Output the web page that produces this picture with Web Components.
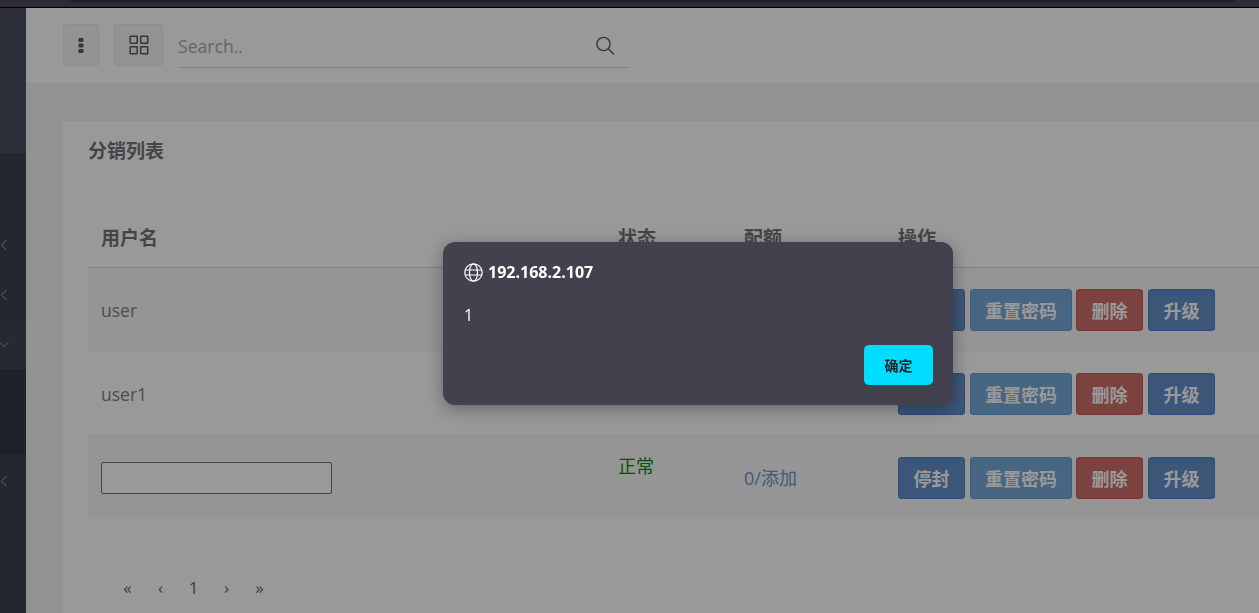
<!DOCTYPE html>
<html lang="zh">
<head>
<meta charset="utf-8">
<title>分销列表</title>
<style>
  html, body { margin: 0; height: 100%; overflow: hidden; background: #f4f4f5; }
  body { font-family: "Open Sans", "Noto Sans CJK SC", sans-serif; color: #7a7a80; }
</style>
</head>
<body>
<app-shell>
  <side-bar slot="side"></side-bar>
  <top-bar slot="top"></top-bar>
  <list-card title="分销列表">
    <user-row name="user"></user-row>
    <user-row name="user1" even></user-row>
    <user-row editing></user-row>
  </list-card>
</app-shell>
<alert-dialog host-name="192.168.2.107" message="1" confirm="确定"></alert-dialog>

<script>
// Outer frame: thin window strip, sidebar on the left, page on the right
class AppShell extends HTMLElement {
  constructor() {
    super();
    this.attachShadow({ mode: 'open' });
    this.shadowRoot.innerHTML = `
      <style>
        :host { display: flex; flex-direction: column; height: 613px; overflow: hidden; }
        .strip { flex: 0 0 7px; background: #4b4856; border-bottom: 1px solid #000; }
        .strip div { height: 2px; margin: 0 24px 0 70px; background: #393742; border-radius: 0 0 3px 3px; }
        .body { flex: 1; display: flex; min-height: 0; }
        .page { flex: 1; min-width: 0; display: flex; flex-direction: column; }
        .content { flex: 1; padding: 37px 0 0 37px; min-height: 0; }
      </style>
      <div class="strip"><div></div></div>
      <div class="body">
        <slot name="side"></slot>
        <div class="page">
          <slot name="top"></slot>
          <div class="content"><slot></slot></div>
        </div>
      </div>
    `;
  }
}

class SideBar extends HTMLElement {
  constructor() {
    super();
    this.attachShadow({ mode: 'open' });
    const left = '<svg width="8" height="12" viewBox="0 0 8 12"><path d="M6.5 1 1.5 6l5 5" fill="none" stroke="#7f828d" stroke-width="1.2"/></svg>';
    const down = '<svg width="10" height="8" viewBox="0 0 10 8"><path d="M0 1.5 4 5.5 8.5 1.5" fill="none" stroke="#7f828d" stroke-width="1.2"/></svg>';
    this.shadowRoot.innerHTML = `
      <style>
        :host { display: flex; flex-direction: column; flex: 0 0 26px; background: #3b414e; overflow: hidden; }
        .brand { height: 145px; background: #4c5162; }
        .item { height: 50px; display: flex; align-items: center; }
        .first { margin-top: 67px; }
        .open { height: 49px; background: #3f4553; }
        .sub { height: 86px; background: #343843; }
        .last { margin-top: 1px; }
      </style>
      <div class="brand"></div>
      <div class="item first">${left}</div>
      <div class="item">${left}</div>
      <div class="item open">${down}</div>
      <div class="sub"></div>
      <div class="item last">${left}</div>
    `;
  }
}

class TopBar extends HTMLElement {
  constructor() {
    super();
    this.attachShadow({ mode: 'open' });
    this.shadowRoot.innerHTML = `
      <style>
        :host { display: flex; align-items: flex-start; gap: 15px; padding: 16px 0 0 37px; box-sizing: border-box; height: 76px; background: #fff; border-bottom: 1px solid #f0f0f0; }
        button { height: 42px; padding: 0; box-sizing: border-box; background: #f5f5f5; border: 1px solid #ececec; border-radius: 3px; display: flex; align-items: center; justify-content: center; }
        .more { width: 36px; }
        .grid { width: 49px; }
        .search { width: 450px; height: 44px; box-sizing: border-box; display: flex; align-items: center; border-bottom: 1px solid #d8d8d8; padding-right: 13px; }
        .search span { flex: 1; font-size: 17.6px; color: #aaa; }
      </style>
      <button class="more" aria-label="more">
        <svg width="6" height="15" viewBox="0 0 6 15" fill="#5a5a60"><rect x=".5" width="5" height="4" rx=".9"/><rect x=".5" y="5.5" width="5" height="4" rx=".9"/><rect x=".5" y="11" width="5" height="4" rx=".9"/></svg>
      </button>
      <button class="grid" aria-label="grid">
        <svg width="20" height="20" viewBox="0 0 20 20" fill="none" stroke="#5a5a60" stroke-width="1.5"><rect x="1.2" y="1.2" width="7" height="7" rx=".5"/><rect x="11.7" y="1.2" width="7" height="7" rx=".5"/><rect x="1.2" y="11.7" width="7" height="7" rx=".5"/><rect x="11.7" y="11.7" width="7" height="7" rx=".5"/></svg>
      </button>
      <div class="search">
        <span>Search..</span>
        <svg width="20" height="20" viewBox="0 0 20 20" fill="none" stroke="#5a5a60" stroke-width="1.4"><circle cx="8.5" cy="8" r="6.6"/><path d="m13.3 12.8 5.7 5.7"/></svg>
      </div>
    `;
  }
}

class ListCard extends HTMLElement {
  constructor() {
    super();
    this.attachShadow({ mode: 'open' });
    this.shadowRoot.innerHTML = `
      <style>
        :host { display: block; background: #fff; padding: 0 0 0 25px; height: 520px; }
        h2 { margin: 0; padding-top: 17px; height: 70px; font-size: 19px; line-height: 26px; font-weight: 700; color: #747478; box-sizing: content-box; }
        .head { display: grid; grid-template-columns: 517px 126px 154px 1fr; height: 60px; box-sizing: border-box; padding: 8px 0 0 13px; font-size: 19px; line-height: 44px; font-weight: 700; color: #747478; border-bottom: 1px solid #d6d6d8; }
        table-pager { margin-top: 59px; }
      </style>
      <h2>${this.getAttribute('title')}</h2>
      <div class="head"><span>用户名</span><span>状态</span><span>配额</span><span>操作</span></div>
      <slot></slot>
      <table-pager></table-pager>
    `;
  }
}

class UserRow extends HTMLElement {
  constructor() {
    super();
    this.attachShadow({ mode: 'open' });
    const name = this.hasAttribute('editing')
      ? '<input type="text" aria-label="用户名">'
      : `<span class="name">${this.getAttribute('name')}</span>`;
    this.shadowRoot.innerHTML = `
      <style>
        :host { display: grid; grid-template-columns: 517px 126px 154px 1fr; align-items: center; height: 84px; box-sizing: border-box; padding-left: 13px; background: #f9f9f9; border-bottom: 1px solid #f1f1f1; font-size: 18px; }
        :host([even]) { background: #fff; }
        :host([editing]) { height: 82px; padding-top: 2px; border-bottom: 0; }
        .name { color: #808084; font-size: 17.5px; }
        input { width: 231px; height: 32px; box-sizing: border-box; background: #fff; border: 1px solid #6f6f77; border-radius: 2px; padding: 0; margin: 0; display: block; }
        .state { color: #0a8a0a; align-self: start; padding-top: 15px; line-height: 26px; }
        .quota { color: #6f93d0; margin-top: -2px; }
        .ops { display: flex; gap: 5px; }
        .ops action-button:nth-child(2) { margin-right: -1px; }
      </style>
      <div>${name}</div>
      <span class="state">正常</span>
      <span class="quota">0/添加</span>
      <div class="ops">
        <action-button kind="primary" width="67">停封</action-button>
        <action-button kind="info" width="102">重置密码</action-button>
        <action-button kind="danger" width="67">删除</action-button>
        <action-button kind="primary" width="67">升级</action-button>
      </div>
    `;
  }
}

class ActionButton extends HTMLElement {
  constructor() {
    super();
    this.attachShadow({ mode: 'open' });
    this.shadowRoot.innerHTML = `
      <style>
        :host { display: flex; align-items: center; justify-content: center; height: 42px; box-sizing: border-box; width: ${this.getAttribute('width')}px; border: 1px solid; border-radius: 3px; color: #fff; font-size: 18px; font-weight: 700; }
        :host([kind=primary]) { background: #6490cc; border-color: #4d7fd0; }
        :host([kind=info]) { background: #78aad8; border-color: #5f9ed8; }
        :host([kind=danger]) { background: #cf6f69; border-color: #cc5a55; }
      </style>
      <slot></slot>
    `;
  }
}

class TablePager extends HTMLElement {
  constructor() {
    super();
    this.attachShadow({ mode: 'open' });
    const items = ['«', '‹', '1', '›', '»'];
    this.shadowRoot.innerHTML = `
      <style>
        :host { display: flex; padding-left: 23px; font-size: 17px; line-height: 22px; color: #68686e; }
        span { width: 33px; text-align: center; }
      </style>
      ${items.map((t) => `<span>${t}</span>`).join('')}
    `;
  }
}

// Browser style alert: dims the whole page and sits on top
class AlertDialog extends HTMLElement {
  constructor() {
    super();
    this.attachShadow({ mode: 'open' });
    this.shadowRoot.innerHTML = `
      <style>
        :host { position: fixed; inset: 0; display: block; padding: 242px 0 0 443px; box-sizing: border-box; background: rgba(0, 0, 0, .4); font-family: "Open Sans", "Noto Sans CJK SC", sans-serif; }
        .box { width: 510px; height: 163px; box-sizing: border-box; padding: 20px 20px 0 21px; background: #44414f; border-radius: 12px; color: #fff; box-shadow: 0 4px 18px rgba(0, 0, 0, .35); display: flex; flex-direction: column; }
        .title { display: flex; align-items: center; gap: 5px; font-size: 16px; font-weight: 700; line-height: 20px; }
        .msg { margin-top: 22px; font-size: 16px; line-height: 22px; }
        .foot { display: flex; justify-content: flex-end; margin-top: 19px; }
        button { width: 69px; height: 40px; background: #00deff; border: 0; border-radius: 5px; color: #22222a; font: 600 14px "Noto Sans CJK SC", sans-serif; padding: 0; }
      </style>
      <div class="box" role="alertdialog">
        <div class="title">
          <svg width="19" height="19" viewBox="0 0 19 19" fill="none" stroke="#fff" stroke-width="1.2"><circle cx="9.5" cy="9.5" r="8.7"/><ellipse cx="9.5" cy="9.5" rx="4" ry="8.7"/><path d="M1 7h17M1 12h17"/></svg>
          <span>${this.getAttribute('host-name')}</span>
        </div>
        <div class="msg">${this.getAttribute('message')}</div>
        <div class="foot"><button>${this.getAttribute('confirm')}</button></div>
      </div>
    `;
  }
}

customElements.define('app-shell', AppShell);
customElements.define('side-bar', SideBar);
customElements.define('top-bar', TopBar);
customElements.define('list-card', ListCard);
customElements.define('user-row', UserRow);
customElements.define('action-button', ActionButton);
customElements.define('table-pager', TablePager);
customElements.define('alert-dialog', AlertDialog);
</script>
</body>
</html>
